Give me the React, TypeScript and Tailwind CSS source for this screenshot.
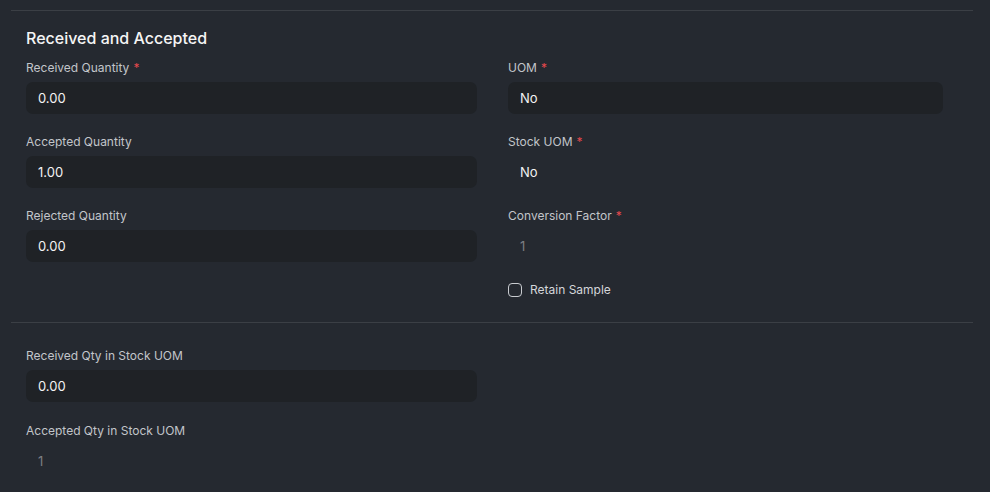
import { ReactNode } from 'react'

const font = { fontFamily: 'Inter, "Noto Sans", sans-serif' }

function Label({ text, required }: { text: string; required?: boolean }) {
  return (
    <div className="h-[24px] pt-[1px] pb-[5px] text-[12px] leading-[18px] text-[#c2c5ca] whitespace-nowrap">
      {text}
      {required && <span className="text-[#e5484d] ml-[4px]">*</span>}
    </div>
  )
}

function Input({ value }: { value: string }) {
  return (
    <div className="h-[32px] pt-[2px] rounded-[7px] bg-[#1f2226] px-[12px] flex items-center text-[13px] text-[#f3f3f3]">
      {value}
    </div>
  )
}

function ReadOnly({ value, muted }: { value: string; muted?: boolean }) {
  return (
    <div
      className={`h-[32px] pt-[2px] px-[12px] flex items-center text-[13px] ${
        muted ? 'text-[#7c7f84]' : 'text-[#f3f3f3]'
      }`}
    >
      {value}
    </div>
  )
}

function Field({ children, className = 'mb-[18px]' }: { children: ReactNode; className?: string }) {
  return <div className={className}>{children}</div>
}

export default function App() {
  return (
    <div
      className="h-[492px] w-[990px] overflow-hidden bg-[#252930] antialiased"
      style={font}
    >
      <div className="pl-[11px] pr-[17px] pt-[10px]">
        <div className="border-t border-[#3b3f45]" />

        {/* Received and Accepted */}
        <div className="pl-[15px] pt-[15px] pb-[21px]">
          <div className="h-[24px] text-[16px] leading-[24px] font-medium text-[#f5f5f5] mb-[8px]">
            Received and Accepted
          </div>
          <div className="flex">
            <div className="w-[451px]">
              <Field>
                <Label text="Received Quantity" required />
                <Input value="0.00" />
              </Field>
              <Field>
                <Label text="Accepted Quantity" />
                <Input value="1.00" />
              </Field>
              <Field>
                <Label text="Rejected Quantity" />
                <Input value="0.00" />
              </Field>
            </div>
            <div className="w-[435px] ml-[31px]">
              <Field>
                <Label text="UOM" required />
                <Input value="No" />
              </Field>
              <Field>
                <Label text="Stock UOM" required />
                <ReadOnly value="No" />
              </Field>
              <Field>
                <Label text="Conversion Factor" required />
                <ReadOnly value="1" muted />
              </Field>
              <label className="flex items-center h-[20px] mt-[1px] mb-[1px]">
                <span className="w-[14px] h-[14px] rounded-[4px] border border-[#c9ccd0] bg-transparent" />
                <span className="ml-[8px] text-[12px] text-[#d4d6da]">Retain Sample</span>
              </label>
            </div>
          </div>
        </div>

        <div className="border-t border-[#3b3f45]" />

        {/* Stock UOM quantities */}
        <div className="pl-[15px] pt-[23px]">
          <div className="w-[451px]">
            <Field className="mb-[19px]">
              <Label text="Received Qty in Stock UOM" />
              <Input value="0.00" />
            </Field>
            <Field>
              <Label text="Accepted Qty in Stock UOM" />
              <ReadOnly value="1" muted />
            </Field>
          </div>
        </div>
      </div>
    </div>
  )
}
